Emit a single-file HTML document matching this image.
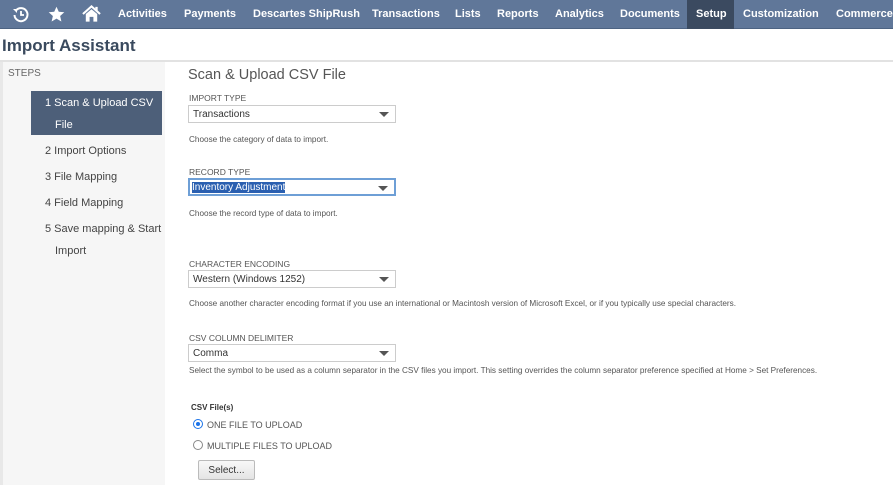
<!DOCTYPE html>
<html><head><meta charset="utf-8"><style>
*{margin:0;padding:0;box-sizing:border-box}
body{width:893px;height:485px;overflow:hidden;background:#fff;font-family:"Liberation Sans",sans-serif;position:relative}
.nav{position:absolute;left:0;top:0;width:893px;height:29px;background:#607799;border-bottom:1px solid #4d6382}
.nav span{position:absolute;top:8px;color:#fff;font-weight:bold;font-size:11px;white-space:nowrap}
.setup{position:absolute;left:687px;top:0;width:47px;height:29px;background:#3b4a60}
.title{position:absolute;left:2px;top:36px;font-size:17px;font-weight:bold;color:#3a4a5e}
.div{position:absolute;left:0;top:60px;width:893px;height:2px;background:#e2e2e2}
.side{position:absolute;left:0;top:62px;width:165px;height:423px;background:#f6f6f6;border-left:3px solid #e8e8e8}
.steps{position:absolute;left:8px;top:68px;font-size:10px;color:#666}
.sel{position:absolute;left:31px;top:91px;width:131px;height:44px;background:#4d5f79}
.st{position:absolute;font-size:11px;color:#444}
.h{position:absolute;left:188px;top:67px;font-size:14.5px;color:#555}
.lab{position:absolute;left:189px;font-size:8.5px;color:#555}
.help{position:absolute;left:189px;font-size:8.2px;color:#555;white-space:nowrap}
.sel2{position:absolute;left:188px;width:208px;height:18px;border:1px solid #ccc;background:#fff;font-size:10px;color:#333;padding:3px 0 0 4px}
.sel2:after{content:"";position:absolute;right:6px;top:6px;border-left:5px solid transparent;border-right:5px solid transparent;border-top:5px solid #555}
.radio{position:absolute;left:193px;width:10px;height:10px;border-radius:50%;border:1px solid #888;background:#fff}
.rl{position:absolute;left:207px;font-size:9px;color:#555}
</style></head><body>
<div class="nav">
<div class="setup"></div>
<svg style="position:absolute;left:12px;top:6px" width="18" height="18" viewBox="0 0 18 18"><path d="M4 4.5A6.5 6.5 0 1 1 2.5 9" fill="none" stroke="#fff" stroke-width="2"/><path d="M1 3l4 0 0 4z" fill="#fff"/><path d="M9 5v4h3" fill="none" stroke="#fff" stroke-width="1.8"/></svg>
<svg style="position:absolute;left:48px;top:6px" width="17" height="17" viewBox="0 0 24 24"><path d="M12 1l3.2 7.2 7.8.7-5.9 5.2 1.8 7.7L12 17.8 5.1 21.8l1.8-7.7L1 8.9l7.8-.7z" fill="#fff"/></svg>
<svg style="position:absolute;left:82px;top:5px" width="19" height="18" viewBox="0 0 20 18"><path d="M1 9L10 1l9 8" fill="none" stroke="#fff" stroke-width="2.2"/><path d="M4 9v8h4v-5h4v5h4V9L10 4z" fill="#fff"/><rect x="14" y="1.5" width="2.5" height="4" fill="#fff"/></svg>
<span style="left:118px">Activities</span>
<span style="left:184px">Payments</span>
<span style="left:253px">Descartes ShipRush</span>
<span style="left:372px">Transactions</span>
<span style="left:455px">Lists</span>
<span style="left:497px">Reports</span>
<span style="left:555px">Analytics</span>
<span style="left:620px">Documents</span>
<span style="left:696px">Setup</span>
<span style="left:743px">Customization</span>
<span style="left:836px">Commerce</span>
</div>
<div class="title">Import Assistant</div>
<div class="div"></div>
<div class="side"></div>
<div class="steps">STEPS</div>
<div class="sel"></div>
<div class="st" style="left:45px;top:97px;color:#fff">1 Scan &amp; Upload CSV</div>
<div class="st" style="left:55px;top:119px;color:#fff">File</div>
<div class="st" style="left:45px;top:145px">2 Import Options</div>
<div class="st" style="left:45px;top:171px">3 File Mapping</div>
<div class="st" style="left:45px;top:197px">4 Field Mapping</div>
<div class="st" style="left:45px;top:223px">5 Save mapping &amp; Start</div>
<div class="st" style="left:55px;top:245px">Import</div>

<div class="h">Scan &amp; Upload CSV File</div>
<div class="lab" style="top:93px">IMPORT TYPE</div>
<div class="sel2" style="top:105px">Transactions</div>
<div class="help" style="top:135px">Choose the category of data to import.</div>
<div class="lab" style="top:167px">RECORD TYPE</div>
<div class="sel2" style="top:178px;border:2px solid #6e9fd6;padding:2px 0 0 2px"><span style="background:#2a5fb0;color:#fff">Inventory Adjustment</span></div>
<div class="help" style="top:209px">Choose the record type of data to import.</div>
<div class="lab" style="top:259px">CHARACTER ENCODING</div>
<div class="sel2" style="top:270px">Western (Windows 1252)</div>
<div class="help" style="top:299px">Choose another character encoding format if you use an international or Macintosh version of Microsoft Excel, or if you typically use special characters.</div>
<div class="lab" style="top:333px">CSV COLUMN DELIMITER</div>
<div class="sel2" style="top:344px">Comma</div>
<div class="help" style="top:366px">Select the symbol to be used as a column separator in the CSV files you import. This setting overrides the column separator preference specified at Home &gt; Set Preferences.</div>
<div style="position:absolute;left:191px;top:403px;font-size:8px;font-weight:bold;color:#333">CSV File(s)</div>
<div class="radio" style="top:419px;border-color:#1a73e8"><div style="position:absolute;left:2px;top:2px;width:4px;height:4px;border-radius:50%;background:#1a73e8"></div></div>
<div class="rl" style="top:420px">ONE FILE TO UPLOAD</div>
<div class="radio" style="top:440px"></div>
<div class="rl" style="top:441px">MULTIPLE FILES TO UPLOAD</div>
<div style="position:absolute;left:198px;top:460px;width:57px;height:20px;border:1px solid #bbb;border-radius:2px;background:linear-gradient(#f8f8f8,#e4e4e4);font-size:10px;color:#333;text-align:center;padding-top:4px">Select...</div>
</body></html>
